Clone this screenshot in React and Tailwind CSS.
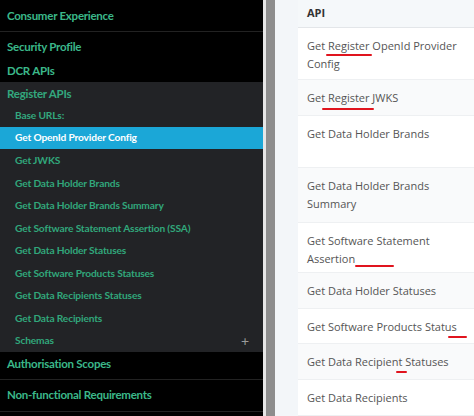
import React from "react";

const subItems = [
  "Get JWKS",
  "Get Data Holder Brands",
  "Get Data Holder Brands Summary",
  "Get Software Statement Assertion (SSA)",
  "Get Data Holder Statuses",
  "Get Software Products Statuses",
  "Get Data Recipients Statuses",
  "Get Data Recipients",
];

// each row: lines of text, height, striped, red marks [left, top, width]
const rows = [
  { lines: ["Get Register OpenId Provider", "Config"], h: 52, alt: false, marks: [[28, 26, 46]] },
  { lines: ["Get Register JWKS"], h: 36, alt: true, marks: [[24, 28, 52]] },
  { lines: ["Get Data Holder Brands"], h: 52, alt: false, marks: [] },
  { lines: ["Get Data Holder Brands", "Summary"], h: 55, alt: true, marks: [] },
  { lines: ["Get Software Statement", "Assertion"], h: 50, alt: false, marks: [[57, 42, 39]] },
  { lines: ["Get Data Holder Statuses"], h: 36, alt: true, marks: [] },
  { lines: ["Get Software Products Status"], h: 35, alt: false, marks: [[150, 27, 19]] },
  { lines: ["Get Data Recipient Statuses"], h: 36, alt: true, marks: [[98, 27, 11]] },
  { lines: ["Get Data Recipients"], h: 36, alt: false, marks: [] },
];

function Sidebar() {
  return (
    <aside
      className="w-[263px] shrink-0 bg-black text-[#3bb88a]"
      style={{ fontFamily: "Lato, 'Noto Sans', sans-serif" }}
    >
      <div className="flex h-[32px] items-center border-b border-[#222] pl-[7px] text-[11.5px] font-bold tracking-[-0.25px]">
        Consumer Experience
      </div>
      <div className="flex h-[27px] items-center pl-[7px] pt-[3px] text-[11.5px] font-bold tracking-[-0.25px]">
        Security Profile
      </div>
      <div className="flex h-[23px] items-center pl-[7px] text-[11.5px] font-bold tracking-[-0.25px]">DCR APIs</div>
      <div className="bg-[#222326]">
        <div className="flex h-[23px] items-center pl-[7px] text-[11.5px] font-bold tracking-[-0.25px] text-[#33a87e]">
          Register APIs
        </div>
        <div className="flex h-[22px] items-center pl-[15px] text-[10.2px] font-bold tracking-[-0.15px] text-[#33a87e]">
          Base URLs:
        </div>
        <div className="flex h-[22px] items-center bg-[#1ba7d7] pl-[15px] text-[10.2px] font-bold tracking-[-0.15px] text-white">
          Get OpenId Provider Config
        </div>
        {subItems.map((t) => (
          <div
            key={t}
            className="flex h-[22.5px] items-center pl-[15px] pt-[1px] text-[10.2px] font-bold tracking-[-0.15px] text-[#31a77b]"
          >
            {t}
          </div>
        ))}
        <div className="flex h-[22.5px] items-center justify-between pl-[15px] pr-[14px] pt-[1px] text-[10.2px] font-bold tracking-[-0.15px] text-[#31a77b]">
          <span>Schemas</span>
          <span className="text-[14px] font-normal text-[#9a9a9a]">+</span>
        </div>
      </div>
      <div className="flex h-[28px] items-center border-b border-[#222] pb-[3px] pl-[7px] text-[11.5px] font-bold tracking-[-0.25px]">
        Authorisation Scopes
      </div>
      <div className="flex h-[32px] items-center border-b border-[#222] pl-[7px] text-[11.5px] font-bold tracking-[-0.25px]">
        Non-functional Requirements
      </div>
    </aside>
  );
}

function ApiTable() {
  return (
    <div
      className="flex-1 bg-[#f3f6f9] pl-[23px]"
      style={{ fontFamily: "'Open Sans', 'Noto Sans', sans-serif" }}
    >
      <div className="flex h-[28px] items-center border-b border-[#e3e6e9] bg-[#f5f8fa] pl-[9px] text-[11px] font-bold text-[#333]">
        API
      </div>
      {rows.map((r, i) => (
        <div
          key={i}
          className={`relative border-b border-[#eef0f2] pl-[9px] pt-[9px] text-[11px] leading-[18px] text-[#555] ${
            r.alt ? "bg-[#f9fafb]" : "bg-white"
          }`}
          style={{ height: r.h }}
        >
          {r.lines.map((l) => (
            <div key={l}>{l}</div>
          ))}
          {r.marks.map((m, j) => (
            <span
              key={j}
              className="absolute h-[2px] rounded-full bg-[#e0141e]"
              style={{ left: m[0], top: m[1], width: m[2] }}
            />
          ))}
        </div>
      ))}
    </div>
  );
}

export default function App() {
  return (
    <div className="flex h-[416px] w-[474px] overflow-hidden bg-white">
      <Sidebar />
      <div className="w-[3px] shrink-0 bg-[#e6e6e6]" />
      <div className="w-[9px] shrink-0 bg-[#8d8d8d]" />
      <ApiTable />
    </div>
  );
}
